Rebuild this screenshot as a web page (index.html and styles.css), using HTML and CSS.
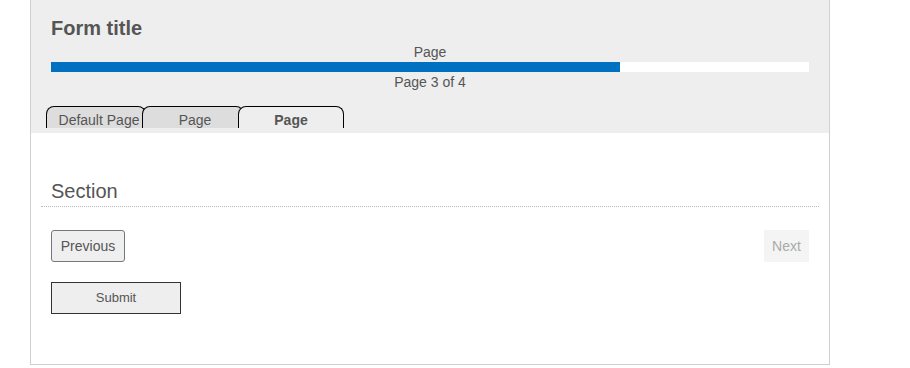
FILE: index.html
```html
<!DOCTYPE html>
<html>
<head>
<meta charset="utf-8">
<link rel="stylesheet" href="styles.css">
</head>
<body>
<div class="form">
  <div class="header">
    <h1 class="title">Form title</h1>
    <div class="progress-label">Page</div>
    <div class="progress"><div class="progress-fill" style="width:75%"></div></div>
    <div class="progress-text">Page 3 of 4</div>
    <div class="tabs">
      <div class="tab tab-1">Default Page</div>
      <div class="tab tab-2">Page</div>
      <div class="tab tab-3 active">Page</div>
    </div>
  </div>
  <div class="body">
    <div class="section">Section</div>
    <div class="nav">
      <button class="btn prev">Previous</button>
      <button class="btn next">Next</button>
    </div>
    <button class="submit">Submit</button>
  </div>
</div>
</body>
</html>
```
FILE: styles.css
```css
html, body {
  margin: 0;
  padding: 0;
  background: #fff;
  font-family: "Liberation Sans", Arial, sans-serif;
  color: #555;
}
.form {
  box-sizing: border-box;
  width: 800px;
  height: 365px;
  margin-left: 30px;
  border: 1px solid #d0d0d0;
  border-top: none;
}
.header {
  background: #eee;
  padding: 16px 20px 0 20px;
  height: 133px;
  box-sizing: border-box;
}
.title {
  margin: 0;
  font-size: 20px;
  line-height: 24px;
  font-weight: bold;
  color: #555;
}
.progress-label {
  margin-top: 4px;
  text-align: center;
  font-size: 14px;
  line-height: 16px;
}
.progress {
  margin-top: 2px;
  height: 10px;
  background: #fff;
}
.progress-fill {
  height: 10px;
  background: #0070c0;
}
.progress-text {
  margin-top: 2px;
  text-align: center;
  font-size: 14px;
  line-height: 16px;
}
.tabs {
  display: flex;
  margin-top: 16px;
  margin-left: -5px;
  height: 22px;
}
.tab {
  box-sizing: border-box;
  height: 22px;
  border: 1px solid #000;
  border-bottom: none;
  border-radius: 8px 8px 0 0;
  background: #ddd;
  font-size: 14px;
  line-height: 26px;
  text-align: center;
  color: #555;
  white-space: nowrap;
  overflow: hidden;
}
.tab-1 { width: 100px; padding-left: 6px; }
.tab-2 { width: 102px; margin-left: -4px; padding-left: 4px; }
.tab-3 { width: 106px; margin-left: -6px; }
.tab.active {
  background: #eee;
  font-weight: bold;
}
.body {
  padding: 0 10px;
}
.section {
  margin-top: 46px;
  padding: 0 10px 3px 10px;
  font-size: 20px;
  line-height: 24px;
  color: #555;
  border-bottom: 1px dotted #bbb;
}
.nav {
  display: flex;
  justify-content: space-between;
  padding: 0 10px;
  margin-top: 23px;
}
.btn {
  box-sizing: border-box;
  height: 32px;
  font-family: "Liberation Sans", Arial, sans-serif;
  font-size: 14px;
  border-radius: 3px;
}
.prev {
  width: 74px;
  border: 1px solid #777;
  background: #efefef;
  color: #555;
  padding: 0;
}
.next {
  width: 45px;
  border: none;
  background: #f4f4f4;
  color: #aaa;
  border-radius: 0;
  padding: 0;
}
.submit {
  display: block;
  box-sizing: border-box;
  margin: 20px 0 0 10px;
  width: 130px;
  height: 32px;
  border: 1px solid #333;
  background: #eee;
  font-family: "Liberation Sans", Arial, sans-serif;
  font-size: 13px;
  color: #555;
  padding: 0 0 1px 0;
}
```
